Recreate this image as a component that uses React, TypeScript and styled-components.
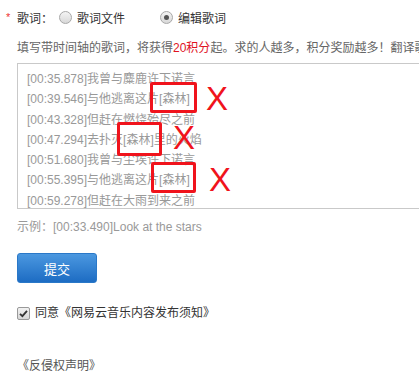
import styled, { createGlobalStyle } from "styled-components";

const GlobalStyle = createGlobalStyle`
  html, body {
    margin: 0;
    padding: 0;
    background: #fff;
    overflow: hidden;
  }
  body {
    font-family: "Liberation Sans", Arial, "Noto Sans CJK SC", sans-serif;
    font-size: 12px;
    color: #333;
  }
`;

const lyrics = [
  "[00:35.878]我曾与麋鹿许下诺言",
  "[00:39.546]与他逃离这片[森林]",
  "[00:43.328]但赶在燃烧殆尽之前",
  "[00:47.294]去扑灭[森林]里的火焰",
  "[00:51.680]我曾与尘埃许下诺言",
  "[00:55.395]与他逃离这片[森林]",
  "[00:59.278]但赶在大雨到来之前",
];

const marks = [
  { box: { left: 132, top: 18, width: 47, height: 31 }, x: { left: 188, top: 23 } },
  { box: { left: 99, top: 58, width: 45, height: 34 }, x: { left: 155, top: 62 } },
  { box: { left: 133, top: 98, width: 45, height: 31 }, x: { left: 191, top: 104 } },
];

export default function App() {
  return (
    <Page>
      <GlobalStyle />
      <FieldRow>
        <Star>*</Star>
        <Label>歌词：</Label>
        <Radio />
        <RadioText>歌词文件</RadioText>
        <Radio $checked $gap />
        <RadioText>编辑歌词</RadioText>
      </FieldRow>

      <Hint>
        填写带时间轴的歌词，将获得<Red>20积分</Red>起。求的人越多，积分奖励越多！翻译歌词也可获得积分
      </Hint>

      <LyricBox>
        {lyrics.map((line) => (
          <LyricLine key={line}>{line}</LyricLine>
        ))}
        {marks.map((m, i) => (
          <span key={i}>
            <MarkBox style={m.box} />
            <MarkX style={m.x}>X</MarkX>
          </span>
        ))}
      </LyricBox>

      <Example>示例：[00:33.490]Look at the stars</Example>

      <SubmitButton>提交</SubmitButton>

      <AgreeRow>
        <CheckBox>
          <svg width="9" height="9" viewBox="0 0 9 9">
            <path d="M1 4.8 L3.4 7.2 L8 1.8" fill="none" stroke="#333" strokeWidth="1.8" />
          </svg>
        </CheckBox>
        <span>同意《网易云音乐内容发布须知》</span>
      </AgreeRow>

      <Notice>《反侵权声明》</Notice>
    </Page>
  );
}

const Page = styled.div`
  width: 419px;
  height: 379px;
  overflow: hidden;
  display: flex;
  flex-direction: column;
`;

const FieldRow = styled.div`
  display: flex;
  align-items: center;
  height: 20px;
  margin-top: 7px;
  padding-left: 6px;
  white-space: nowrap;
`;

const Star = styled.span`
  width: 11px;
  color: #e33;
  font-size: 11px;
`;

const Label = styled.span`
  width: 42px;
`;

const Radio = styled.span<{ $checked?: boolean; $gap?: boolean }>`
  position: relative;
  width: 11px;
  height: 11px;
  border-radius: 50%;
  border: 1px solid #a8a8a8;
  background: linear-gradient(#f4f4f4, #d8d8d8);
  margin-left: ${(p) => (p.$gap ? "35px" : "0")};
  margin-right: 5px;

  &::after {
    content: "";
    display: ${(p) => (p.$checked ? "block" : "none")};
    position: absolute;
    left: 3px;
    top: 3px;
    width: 5px;
    height: 5px;
    border-radius: 50%;
    background: #555;
  }
`;

const RadioText = styled.span`
  color: #333;
`;

const Hint = styled.div`
  margin-top: 13px;
  padding-left: 17px;
  line-height: 16px;
  color: #666;
  white-space: nowrap;
`;

const Red = styled.span`
  color: #e0121f;
`;

const LyricBox = styled.div`
  position: relative;
  margin-top: 7px;
  margin-left: 17px;
  width: 460px;
  height: 134px;
  padding: 5px 9px;
  border: 1px solid #c9c9c9;
  flex-shrink: 0;
`;

const LyricLine = styled.div`
  line-height: 20.3px;
  color: #999;
  white-space: nowrap;
`;

const MarkBox = styled.div`
  position: absolute;
  box-sizing: border-box;
  border: 3px solid #f0131c;
  border-radius: 2px;
`;

const MarkX = styled.div`
  position: absolute;
  font-family: "Liberation Sans", Arial, sans-serif;
  font-size: 33px;
  line-height: 24px;
  color: #f0131c;
`;

const Example = styled.div`
  margin-top: 10px;
  padding-left: 17px;
  line-height: 16px;
  color: #999;
`;

const SubmitButton = styled.button`
  margin: 18px 0 0 17px;
  width: 80px;
  height: 30px;
  border: 1px solid #2a78c8;
  border-radius: 3px;
  background: linear-gradient(#4b98e0, #1d6cc3);
  color: #fff;
  font-family: "Liberation Sans", Arial, "Noto Sans CJK SC", sans-serif;
  font-size: 13px;
  padding: 0;
`;

const AgreeRow = styled.div`
  display: flex;
  align-items: center;
  gap: 5px;
  margin-top: 22px;
  padding-left: 17px;
  line-height: 16px;
  color: #333;
`;

const CheckBox = styled.span`
  display: flex;
  align-items: center;
  justify-content: center;
  width: 11px;
  height: 11px;
  border: 1px solid #999;
  border-radius: 2px;
  background: linear-gradient(#f2f2f2, #d6d6d6);
`;

const Notice = styled.div`
  margin-top: 37px;
  padding-left: 17px;
  line-height: 16px;
  color: #555;
`;
